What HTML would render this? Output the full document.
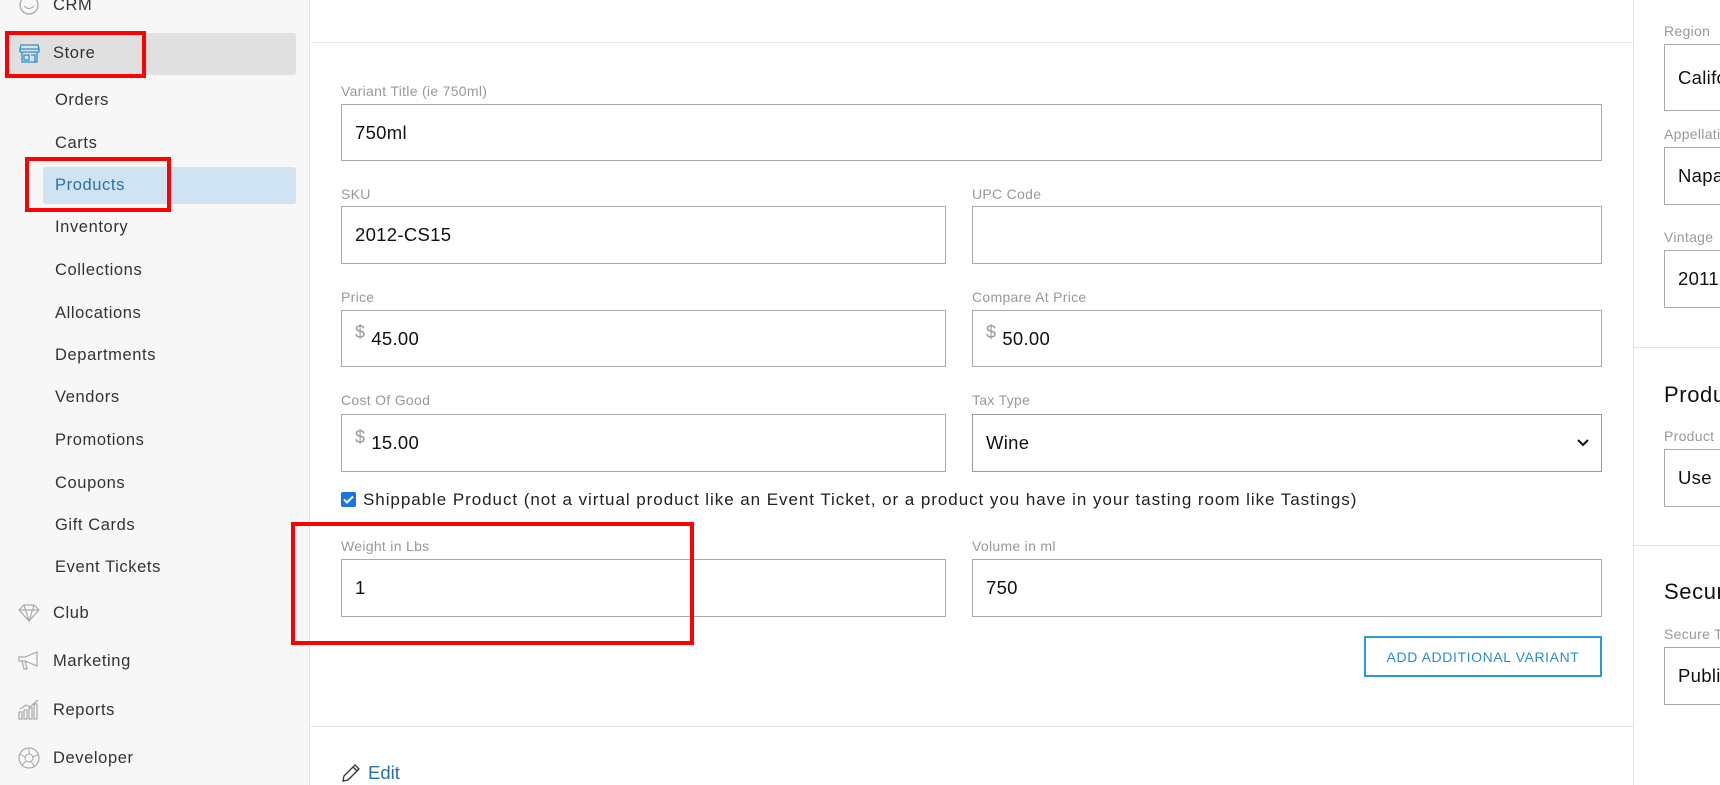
<!DOCTYPE html>
<html><head><style>
*{box-sizing:border-box;margin:0;padding:0}
body{width:1720px;height:785px;overflow:hidden;background:#fff;font-family:"Liberation Sans",sans-serif;position:relative;color:#111}
.a{position:absolute}
#side{left:0;top:0;width:310px;height:785px;background:#f7f7f7;border-right:1px solid #e2e2e2}
.si{position:absolute;left:55px;font-size:16.5px;color:#333;letter-spacing:.6px;line-height:20px}
.mi{position:absolute;left:53px;font-size:16.5px;color:#333;letter-spacing:.6px;line-height:20px}
.lbl{position:absolute;font-size:14px;color:#999;letter-spacing:.3px;line-height:16px}
.inp{position:absolute;border:1px solid #aaa;background:#fff;font-size:18.5px;padding-left:13px;display:flex;align-items:center;letter-spacing:.3px}
.red{position:absolute;border:4px solid #f00}
.dl{color:#999;font-size:18px;margin-right:6px;position:relative;top:-6px}
.hl{position:absolute;height:1px;background:#e2e2e2}
</style></head><body>
<div class="a" id="side"></div>
<svg class="a" style="left:18px;top:-6px" width="22" height="22"><circle cx="11" cy="11" r="9" fill="none" stroke="#aaa" stroke-width="1.3"/><path d="M6 12 Q11 17 16 12" fill="none" stroke="#aaa"/></svg>
<div class="mi" style="top:-5px">CRM</div>
<div class="a" style="left:9px;top:33px;width:287px;height:42px;background:#e0e0e0;border-radius:3px"></div>
<svg class="a" style="left:19px;top:44px" width="21" height="19"><path d="M1 5h19v3H1zM2 1h17l1 4H1zM3 8v10h15V8M5 11h5v5H5zM12 11h4v7" fill="none" stroke="#2a8fd0" stroke-width="1.3"/></svg>
<div class="mi" style="top:43px">Store</div>
<div class="a" style="left:43px;top:167px;width:253px;height:37px;background:#cfe3f2;border-radius:3px"></div>
<div class="si" style="top:90px">Orders</div>
<div class="si" style="top:133px">Carts</div>
<div class="si" style="top:175px;color:#2a72a8">Products</div>
<div class="si" style="top:217px">Inventory</div>
<div class="si" style="top:260px">Collections</div>
<div class="si" style="top:303px">Allocations</div>
<div class="si" style="top:345px">Departments</div>
<div class="si" style="top:387px">Vendors</div>
<div class="si" style="top:430px">Promotions</div>
<div class="si" style="top:473px">Coupons</div>
<div class="si" style="top:515px">Gift Cards</div>
<div class="si" style="top:557px">Event Tickets</div>
<svg class="a" style="left:18px;top:604px" width="22" height="18"><path d="M1 6l5-5h10l5 5-10 11zM1 6h20M6 1l5 16 5-16" fill="none" stroke="#aaa" stroke-width="1.2"/></svg>
<div class="mi" style="top:603px">Club</div>
<svg class="a" style="left:18px;top:651px" width="22" height="20"><path d="M1 6h6l12-5v14L7 10H1zM4 10l2 8h3l-2-8" fill="none" stroke="#aaa" stroke-width="1.2"/></svg>
<div class="mi" style="top:651px">Marketing</div>
<svg class="a" style="left:18px;top:698px" width="22" height="22"><path d="M1 14h3v7H1zM6 12h3v9H6zM11 10h3v11h-3zM16 6h3v15h-3zM2 11l6-4 4 2 8-7" fill="none" stroke="#aaa" stroke-width="1.2"/></svg>
<div class="mi" style="top:700px">Reports</div>
<svg class="a" style="left:18px;top:747px" width="22" height="22"><circle cx="11" cy="11" r="10" fill="none" stroke="#aaa" stroke-width="1.2"/><circle cx="11" cy="11" r="4" fill="none" stroke="#aaa"/><path d="M11 1v6M20 8l-6 2M16 19l-3-5M4 18l4-4M2 7l5 3" stroke="#aaa"/></svg>
<div class="mi" style="top:748px">Developer</div>
<div class="red" style="left:5px;top:31px;width:141px;height:47px"></div>
<div class="red" style="left:25px;top:157px;width:146px;height:55px"></div>

<div class="hl" style="left:311px;top:42px;width:1323px"></div>
<div class="hl" style="left:311px;top:726px;width:1323px"></div>
<div class="a" style="left:1633px;top:0;width:1px;height:785px;background:#e2e2e2"></div>

<div class="lbl" style="left:341px;top:83px">Variant Title (ie 750ml)</div>
<div class="inp" style="left:341px;top:104px;width:1261px;height:57px">750ml</div>
<div class="lbl" style="left:341px;top:186px">SKU</div>
<div class="inp" style="left:341px;top:206px;width:605px;height:58px">2012-CS15</div>
<div class="lbl" style="left:972px;top:186px">UPC Code</div>
<div class="inp" style="left:972px;top:206px;width:630px;height:58px"></div>
<div class="lbl" style="left:341px;top:289px">Price</div>
<div class="inp" style="left:341px;top:310px;width:605px;height:57px"><span class="dl">$</span>45.00</div>
<div class="lbl" style="left:972px;top:289px">Compare At Price</div>
<div class="inp" style="left:972px;top:310px;width:630px;height:57px"><span class="dl">$</span>50.00</div>
<div class="lbl" style="left:341px;top:392px">Cost Of Good</div>
<div class="inp" style="left:341px;top:414px;width:605px;height:58px"><span class="dl">$</span>15.00</div>
<div class="lbl" style="left:972px;top:392px">Tax Type</div>
<div class="inp" style="left:972px;top:414px;width:630px;height:58px;border-color:#999">Wine<svg style="position:absolute;right:12px;top:24px" width="12" height="9"><path d="M1 1l5 5 5-5" fill="none" stroke="#111" stroke-width="2"/></svg></div>
<div class="a" style="left:341px;top:492px;width:15px;height:15px;background:#1a73e8;border-radius:2px"><svg width="15" height="15"><path d="M3 7.5l3 3 6-6" fill="none" stroke="#fff" stroke-width="2"/></svg></div>
<div class="a" style="left:363px;top:490px;font-size:17px;letter-spacing:.95px;color:#222;white-space:nowrap">Shippable Product (not a virtual product like an Event Ticket, or a product you have in your tasting room like Tastings)</div>
<div class="lbl" style="left:341px;top:538px">Weight in Lbs</div>
<div class="inp" style="left:341px;top:559px;width:605px;height:58px">1</div>
<div class="lbl" style="left:972px;top:538px">Volume in ml</div>
<div class="inp" style="left:972px;top:559px;width:630px;height:58px">750</div>
<div class="red" style="left:291px;top:522px;width:403px;height:123px"></div>
<div class="a" style="left:1364px;top:636px;width:238px;height:41px;border:2px solid #2a9bd6;color:#2a8fd0;font-size:14px;letter-spacing:.6px;display:flex;align-items:center;justify-content:center">ADD ADDITIONAL VARIANT</div>
<svg class="a" style="left:341px;top:763px" width="20" height="20"><path d="M2 18l1-5L14 2l4 4L7 17zM12 4l4 4" fill="none" stroke="#333" stroke-width="1.3"/></svg>
<div class="a" style="left:368px;top:762px;font-size:18.5px;color:#2a72a8">Edit</div>

<div class="lbl" style="left:1664px;top:23px">Region</div>
<div class="inp" style="left:1664px;top:44px;width:80px;height:67px">California</div>
<div class="lbl" style="left:1664px;top:126px">Appellation</div>
<div class="inp" style="left:1664px;top:147px;width:80px;height:58px">Napa</div>
<div class="lbl" style="left:1664px;top:229px">Vintage</div>
<div class="inp" style="left:1664px;top:250px;width:80px;height:58px">2011</div>
<div class="hl" style="left:1634px;top:347px;width:86px"></div>
<div class="a" style="left:1664px;top:382px;font-size:22px;letter-spacing:.6px;white-space:nowrap">Product</div>
<div class="lbl" style="left:1664px;top:428px">Product</div>
<div class="inp" style="left:1664px;top:449px;width:80px;height:58px">Use</div>
<div class="hl" style="left:1634px;top:545px;width:86px"></div>
<div class="a" style="left:1664px;top:579px;font-size:22px;letter-spacing:.6px;white-space:nowrap">Secure</div>
<div class="lbl" style="left:1664px;top:626px;white-space:nowrap">Secure Type</div>
<div class="inp" style="left:1664px;top:647px;width:80px;height:58px">Public</div>
</body></html>
